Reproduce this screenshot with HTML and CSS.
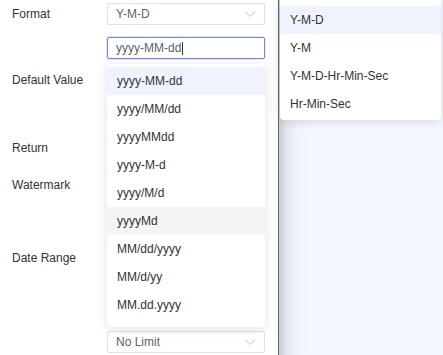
FILE: index.html
```html
<!DOCTYPE html>
<html>
<head>
<meta charset="utf-8">
<link rel="stylesheet" href="styles.css">
</head>
<body>
<div class="page">
  <div class="form">
    <div class="row row-format">
      <div class="label">Format</div>
      <div class="controls">
        <div class="select"><span>Y-M-D</span><svg class="chev" viewBox="0 0 12 8" width="12" height="8"><path d="M1 1.5 L6 6.5 L11 1.5" fill="none" stroke="#c0c4cc" stroke-width="1"/></svg></div>
        <div class="input focused"><span>yyyy-MM-dd</span><i class="caret"></i></div>
      </div>
    </div>
    <div class="row row-default"><div class="label">Default Value</div></div>
    <div class="row row-return"><div class="label">Return</div></div>
    <div class="row row-water"><div class="label">Watermark</div></div>
    <div class="row row-range"><div class="label">Date Range</div></div>
    <div class="row row-limit">
      <div class="label"></div>
      <div class="controls">
        <div class="select"><span>No Limit</span><svg class="chev" viewBox="0 0 12 8" width="12" height="8"><path d="M1 1.5 L6 6.5 L11 1.5" fill="none" stroke="#c0c4cc" stroke-width="1"/></svg></div>
      </div>
    </div>

    <ul class="menu menu-formats">
      <li class="active">yyyy-MM-dd</li>
      <li>yyyy/MM/dd</li>
      <li>yyyyMMdd</li>
      <li>yyyy-M-d</li>
      <li>yyyy/M/d</li>
      <li class="hover">yyyyMd</li>
      <li>MM/dd/yyyy</li>
      <li>MM/d/yy</li>
      <li>MM.dd.yyyy</li>
    </ul>
  </div>
  <div class="side">
    <ul class="menu menu-types">
      <li class="active">Y-M-D</li>
      <li>Y-M</li>
      <li>Y-M-D-Hr-Min-Sec</li>
      <li>Hr-Min-Sec</li>
    </ul>
  </div>
</div>
</body>
</html>
```
FILE: styles.css
```css
* { box-sizing: border-box; }
html, body { margin: 0; padding: 0; }
body {
  font-family: "Liberation Sans", Arial, sans-serif;
  font-size: 12px;
  color: #333;
  background: #fff;
  width: 443px;
  height: 355px;
  overflow: hidden;
}
.page {
  display: grid;
  grid-template-columns: 278px 1fr;
  height: 355px;
}
.form {
  position: relative;
  background: #fff;
  padding-top: 3px;
}
.row {
  display: flex;
  align-items: flex-start;
}
.label {
  width: 107px;
  padding-left: 12px;
  line-height: 22px;
  height: 22px;
  color: #333;
}
.controls {
  display: flex;
  flex-direction: column;
  gap: 12px;
  width: 158px;
}
.row-format { height: 66px; }
.row-default { height: 68px; }
.row-return { height: 37px; }
.row-water { height: 73px; }
.row-range { height: 84px; }
.select, .input {
  height: 22px;
  border: 1px solid #dcdfe6;
  border-radius: 2px;
  display: flex;
  align-items: center;
  padding-left: 8px;
  padding-right: 8px;
  color: #606266;
  background: #fff;
}
.select span { flex: 1; }
.chev { display: block; }
.input.focused {
  border-color: #7383ee;
  box-shadow: 0 0 0 1px rgba(115, 131, 238, 0.18);
}
.caret {
  display: inline-block;
  width: 1px;
  height: 13px;
  background: #333;
  margin-left: 1px;
}
.menu {
  list-style: none;
  margin: 0;
  padding: 0;
  background: #fff;
  border-radius: 4px;
  box-shadow: 0 2px 12px rgba(0, 0, 0, 0.12);
}
.menu li {
  height: 28px;
  line-height: 28px;
  padding-left: 10px;
  color: #333;
  white-space: nowrap;
}
.menu li.active { background: #eef3fd; }
.menu li.hover { background: #f5f5f5; }
.menu-formats {
  position: absolute;
  left: 107px;
  top: 64px;
  width: 158px;
  padding: 3px 0 8px;
}
.side {
  position: relative;
  border-left: 1px solid #60666e;
  background: linear-gradient(to right, #c9ced5 0px, #e3e8ee 8px, #eff4fa 18px, #f4f8fe 30px);
}
.menu-types {
  position: absolute;
  left: 1px;
  top: -4px;
  width: 161px;
  padding: 10px 0 2px;
  border-radius: 0 0 4px 4px;
}
```
